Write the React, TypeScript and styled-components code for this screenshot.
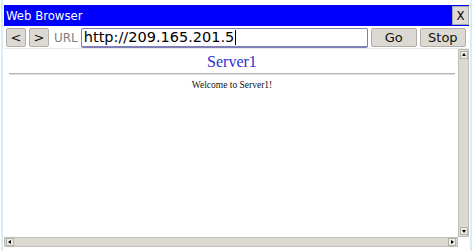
import React from 'react';
import styled, {createGlobalStyle} from "styled-components";

const Global = createGlobalStyle`
  html, body {
    margin: 0;
    padding: 0;
    background: #ffffff;
  }
  body {
    width: 474px;
    height: 251px;
    overflow: hidden;
  }
`;

const Page = styled.div`
  width: 474px;
  height: 251px;
  box-sizing: border-box;
  padding: 5px 5px 4px 4px;
  background: linear-gradient(to right, #ffffff 0 1px, #d8eef6 1px 3px, #ffffff 3px calc(100% - 4px), #d8eef6 calc(100% - 4px) calc(100% - 2px), #ffffff calc(100% - 2px));
`;

const Window = styled.div`
  height: 100%;
  display: grid;
  grid-template-rows: 21px 22px 1fr;
  background: #f0f0f0;
  font-family: "DejaVu Sans", sans-serif;
`;

const TitleBar = styled.div`
  background: #0000ff;
  display: flex;
  align-items: center;
  justify-content: space-between;
  padding-left: 2px;
  color: #ffffff;
  font-size: 13px;
  font-stretch: condensed;
  font-family: "DejaVu Sans Condensed", "DejaVu Sans", sans-serif;
`;

const CloseButton = styled.div`
  width: 17px;
  height: 19px;
  background: #dedbd4;
  border: 1px solid #a8a8a8;
  box-sizing: border-box;
  color: #000;
  font-size: 13px;
  display: flex;
  align-items: center;
  justify-content: center;
`;

const Toolbar = styled.div`
  display: flex;
  align-items: center;
  gap: 3px;
  padding: 1px 2px 0 2px;
  background: #ffffff;
`;

const Button = styled.div<{ $w: number }>`
  width: ${p => p.$w}px;
  height: 19px;
  box-sizing: border-box;
  background: #dcd9d2;
  border: 1px solid #b0aea8;
  border-radius: 2px;
  display: flex;
  align-items: center;
  justify-content: center;
  font-size: 13px;
  color: #111;
`;

const Label = styled.div`
  color: #808080;
  font-size: 12px;
  padding: 0 0 0 2px;
`;

const UrlBox = styled.div`
  width: 287px;
  height: 20px;
  box-sizing: border-box;
  border: 1px solid #7f7fb8;
  border-bottom-width: 2px;
  border-radius: 2px;
  background: #fff;
  font-size: 14.5px;
  color: #000;
  display: flex;
  align-items: center;
  padding-left: 2px;
`;

const Caret = styled.span`
  display: inline-block;
  width: 1px;
  height: 15px;
  background: #000;
  margin-left: 1px;
`;

const Body = styled.div`
  display: grid;
  grid-template-columns: 1fr 11px;
  grid-template-rows: 1fr 10px;
  border-top: 1px solid #e8e8e8;
`;

const Content = styled.div`
  background: #fff;
  padding: 3px 3px 0 5px;
  font-family: "Liberation Serif", serif;
  text-align: center;
`;

const Heading = styled.div`
  color: #2f2fd0;
  font-size: 16px;
  line-height: 19px;
`;

const Rule = styled.div`
  height: 1px;
  background: #b8b8b8;
  border-bottom: 1px solid #e0e0e0;
  margin: 2px 0 5px 0;
`;

const Text = styled.div`
  font-size: 9.5px;
  color: #111;
`;

const ScrollTrack = styled.div<{ $vertical?: boolean }>`
  background: #dcd9d0;
  border: 1px solid #c0beb6;
  box-sizing: border-box;
  display: flex;
  flex-direction: ${p => p.$vertical ? 'column' : 'row'};
  justify-content: space-between;
  align-items: center;
  padding: 1px;
`;

const Arrow = styled.div`
  width: 8px;
  height: 8px;
  background: #eeece6;
  border: 1px solid #b4b2aa;
  box-sizing: border-box;
  display: flex;
  align-items: center;
  justify-content: center;
`;

const Corner = styled.div`
  background: #ffffff;
`;

function Tri({dir}: { dir: 'up' | 'down' | 'left' | 'right' }) {
    const pts = {
        up: "3,1 5,4 1,4",
        down: "1,2 5,2 3,5",
        left: "4,1 4,5 1,3",
        right: "2,1 2,5 5,3",
    }[dir];
    return <svg width="6" height="6" viewBox="0 0 6 6">
        <polygon points={pts} fill="#000"/>
    </svg>;
}

export default function App() {
    return <>
        <Global/>
        <Page>
            <Window>
                <TitleBar>
                    <span>Web Browser</span>
                    <CloseButton>X</CloseButton>
                </TitleBar>
                <Toolbar>
                    <Button $w={20}>&lt;</Button>
                    <Button $w={20}>&gt;</Button>
                    <Label>URL</Label>
                    <UrlBox>http://209.165.201.5<Caret/></UrlBox>
                    <Button $w={46}>Go</Button>
                    <Button $w={46}>Stop</Button>
                </Toolbar>
                <Body>
                    <Content>
                        <Heading>Server1</Heading>
                        <Rule/>
                        <Text>Welcome to Server1!</Text>
                    </Content>
                    <ScrollTrack $vertical>
                        <Arrow><Tri dir="up"/></Arrow>
                        <Arrow><Tri dir="down"/></Arrow>
                    </ScrollTrack>
                    <ScrollTrack>
                        <Arrow><Tri dir="left"/></Arrow>
                        <Arrow><Tri dir="right"/></Arrow>
                    </ScrollTrack>
                    <Corner/>
                </Body>
            </Window>
        </Page>
    </>;
}
